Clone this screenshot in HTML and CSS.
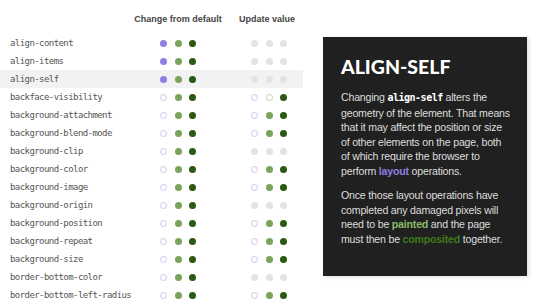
FILE: index.html
```html
<!DOCTYPE html>
<html lang="en">
<head>
    <meta charset="UTF-8">
    <title>CSS Triggers - align-self</title>
    <link rel="stylesheet" href="styles.css">
</head>
<body>
    <div class="page">
        <div class="table">
            <div class="row head">
                <div class="name"></div>
                <div class="col-change">Change from default</div>
                <div class="col-update">Update value</div>
            </div>

            <div class="row">
                <div class="name">align-content</div>
                <div class="dots change"><span class="dot p"></span><span class="dot g"></span><span class="dot d"></span></div>
                <div class="dots update"><span class="dot x"></span><span class="dot x"></span><span class="dot x"></span></div>
            </div>
            <div class="row">
                <div class="name">align-items</div>
                <div class="dots change"><span class="dot p"></span><span class="dot g"></span><span class="dot d"></span></div>
                <div class="dots update"><span class="dot x"></span><span class="dot x"></span><span class="dot x"></span></div>
            </div>
            <div class="row active">
                <div class="name">align-self</div>
                <div class="dots change"><span class="dot p"></span><span class="dot g"></span><span class="dot d"></span></div>
                <div class="dots update"><span class="dot x"></span><span class="dot x"></span><span class="dot x"></span></div>
            </div>
            <div class="row">
                <div class="name">backface-visibility</div>
                <div class="dots change"><span class="dot po"></span><span class="dot g"></span><span class="dot d"></span></div>
                <div class="dots update"><span class="dot po"></span><span class="dot go"></span><span class="dot d"></span></div>
            </div>
            <div class="row">
                <div class="name">background-attachment</div>
                <div class="dots change"><span class="dot po"></span><span class="dot g"></span><span class="dot d"></span></div>
                <div class="dots update"><span class="dot po"></span><span class="dot g"></span><span class="dot d"></span></div>
            </div>
            <div class="row">
                <div class="name">background-blend-mode</div>
                <div class="dots change"><span class="dot po"></span><span class="dot g"></span><span class="dot d"></span></div>
                <div class="dots update"><span class="dot po"></span><span class="dot g"></span><span class="dot d"></span></div>
            </div>
            <div class="row">
                <div class="name">background-clip</div>
                <div class="dots change"><span class="dot po"></span><span class="dot g"></span><span class="dot d"></span></div>
                <div class="dots update"><span class="dot x"></span><span class="dot x"></span><span class="dot x"></span></div>
            </div>
            <div class="row">
                <div class="name">background-color</div>
                <div class="dots change"><span class="dot po"></span><span class="dot g"></span><span class="dot d"></span></div>
                <div class="dots update"><span class="dot po"></span><span class="dot g"></span><span class="dot d"></span></div>
            </div>
            <div class="row">
                <div class="name">background-image</div>
                <div class="dots change"><span class="dot po"></span><span class="dot g"></span><span class="dot d"></span></div>
                <div class="dots update"><span class="dot po"></span><span class="dot g"></span><span class="dot d"></span></div>
            </div>
            <div class="row">
                <div class="name">background-origin</div>
                <div class="dots change"><span class="dot po"></span><span class="dot g"></span><span class="dot d"></span></div>
                <div class="dots update"><span class="dot x"></span><span class="dot x"></span><span class="dot x"></span></div>
            </div>
            <div class="row">
                <div class="name">background-position</div>
                <div class="dots change"><span class="dot po"></span><span class="dot g"></span><span class="dot d"></span></div>
                <div class="dots update"><span class="dot po"></span><span class="dot g"></span><span class="dot d"></span></div>
            </div>
            <div class="row">
                <div class="name">background-repeat</div>
                <div class="dots change"><span class="dot po"></span><span class="dot g"></span><span class="dot d"></span></div>
                <div class="dots update"><span class="dot po"></span><span class="dot g"></span><span class="dot d"></span></div>
            </div>
            <div class="row">
                <div class="name">background-size</div>
                <div class="dots change"><span class="dot po"></span><span class="dot g"></span><span class="dot d"></span></div>
                <div class="dots update"><span class="dot po"></span><span class="dot g"></span><span class="dot d"></span></div>
            </div>
            <div class="row">
                <div class="name">border-bottom-color</div>
                <div class="dots change"><span class="dot po"></span><span class="dot g"></span><span class="dot d"></span></div>
                <div class="dots update"><span class="dot x"></span><span class="dot x"></span><span class="dot x"></span></div>
            </div>
            <div class="row">
                <div class="name">border-bottom-left-radius</div>
                <div class="dots change"><span class="dot po"></span><span class="dot g"></span><span class="dot d"></span></div>
                <div class="dots update"><span class="dot po"></span><span class="dot g"></span><span class="dot d"></span></div>
            </div>
        </div>

        <div class="panel">
            <h2>ALIGN-SELF</h2>
            <p>Changing <code>align-self</code> alters the geometry of the element. That means that it may affect the position or size of other elements on the page, both of which require the browser to perform <b class="layout">layout</b> operations.</p>
            <p>Once those layout operations have completed any damaged pixels will need to be <b class="paint">painted</b> and the page must then be <b class="composite">composited</b> together.</p>
        </div>
    </div>
</body>
</html>
```

FILE: styles.css
```css
body {
    margin: 0;
    background: #fff;
    font-family: "Liberation Sans", Arial, sans-serif;
    overflow: hidden;
}
.page {
    display: flex;
    align-items: flex-start;
}
.table {
    width: 303px;
    flex-shrink: 0;
}
.row {
    display: grid;
    grid-template-columns: 132px 92px 79px;
    align-items: center;
    height: 18px;
}
.row.active {
    background: #f2f2f2;
}
.row.head {
    height: 34px;
    align-items: start;
    font-size: 9px;
    font-weight: bold;
    color: #444;
}
.head .col-change,
.head .col-update {
    padding-top: 14px;
    line-height: 11px;
    white-space: nowrap;
}
.head .col-change {
    text-align: center;
}
.head .col-update {
    padding-left: 15px;
}
.name {
    padding-left: 10px;
    font-family: "DejaVu Sans Mono", monospace;
    font-size: 9px;
    letter-spacing: -0.57px;
    color: #555;
    white-space: nowrap;
}
.dots {
    display: flex;
    gap: 7.5px;
}
.dots.change {
    justify-content: center;
}
.dots.update {
    padding-left: 27px;
}
.dot {
    width: 7px;
    height: 7px;
    border-radius: 50%;
    box-sizing: border-box;
}
.dot.p { background: #8e80e2; }
.dot.po { border: 1px solid #cbc3ef; }
.dot.g { background: #7ba35c; }
.dot.go { border: 1px solid #bcd3a8; }
.dot.d { background: #2c5912; }
.dot.x { background: #e3e3e3; }

.panel {
    margin: 37px 0 0 20px;
    width: 204px;
    height: 239px;
    box-sizing: border-box;
    padding: 17px 17px 0 18px;
    background: #202020;
    box-shadow: 2px 1px 4px rgba(0,0,0,0.12);
    color: #ddd;
}
.panel h2 {
    margin: 0 0 10px 0;
    font-family: Lato, sans-serif;
    font-weight: 900;
    font-size: 19.5px;
    line-height: 26px;
    color: #fff;
}
.panel p {
    margin: 0 0 9.5px 0;
    font-size: 10.6px;
    letter-spacing: -0.2px;
    line-height: 14.6px;
}
.panel code {
    font-family: "DejaVu Sans Mono", monospace;
    font-weight: bold;
    font-size: 10px;
    letter-spacing: -0.5px;
    color: #fff;
}
.panel b {
    font-weight: bold;
}
.layout { color: #8e80e2; }
.paint { color: #8bbd68; }
.composite { color: #3f7a1c; }
```
